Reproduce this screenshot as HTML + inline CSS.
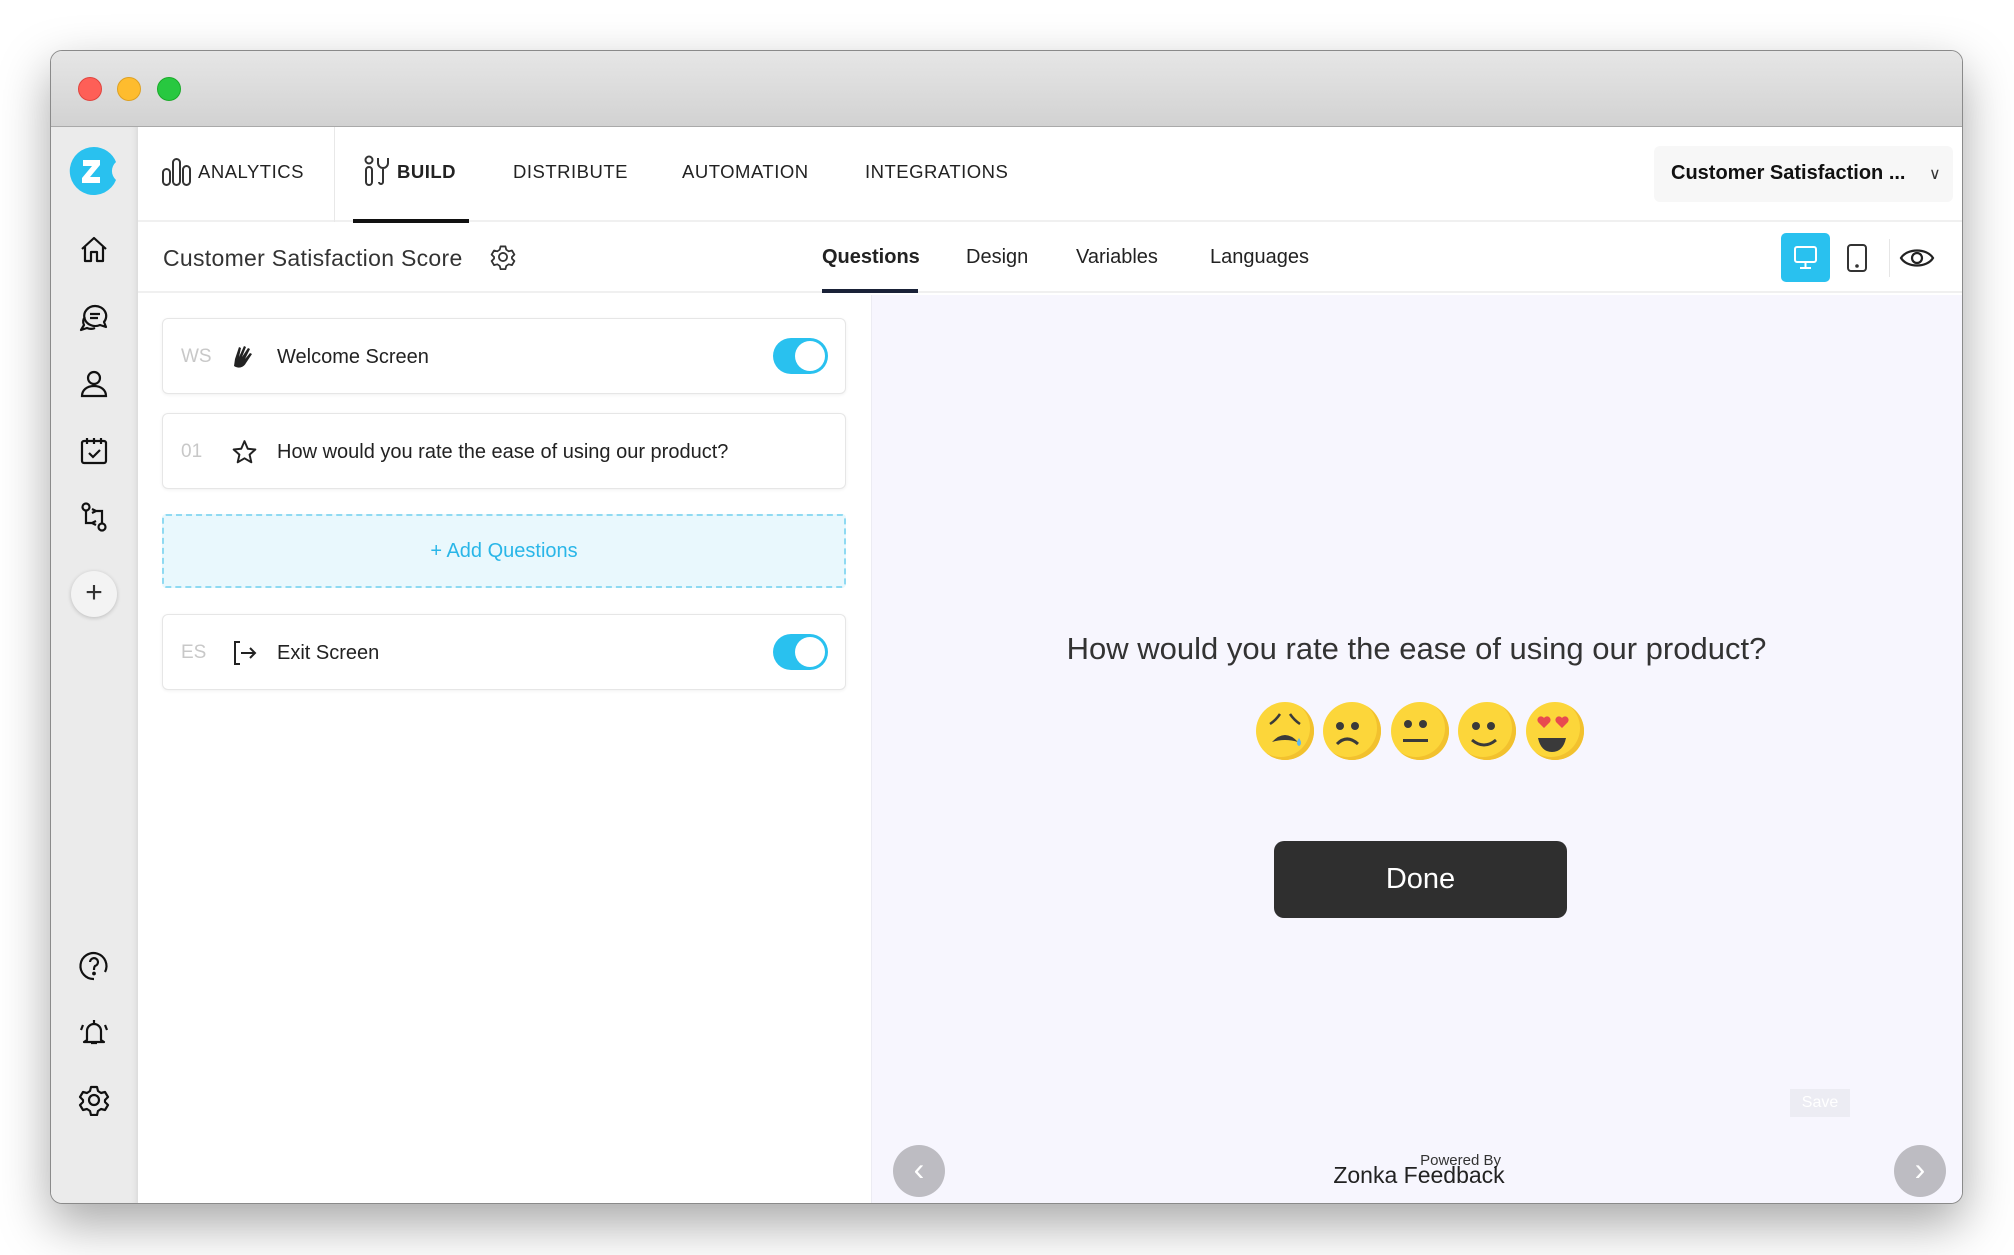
<!DOCTYPE html>
<html><head><meta charset="utf-8"><style>
*{box-sizing:border-box;margin:0;padding:0}
body{width:2014px;height:1255px;background:#fff;font-family:"Liberation Sans",sans-serif;position:relative;overflow:hidden}
.win{position:absolute;left:50px;top:50px;width:1913px;height:1154px;border:1px solid #8a8a8a;border-radius:12px;overflow:hidden;box-shadow:0 20px 50px rgba(0,0,0,.35);background:#fff}
.title{position:absolute;left:0;top:0;width:100%;height:76px;background:linear-gradient(#e6e6e6,#d2d2d2);border-bottom:1px solid #a9a9a9}
.dot{position:absolute;top:26px;width:24px;height:24px;border-radius:50%}
.side{position:absolute;left:0;top:76px;width:87px;bottom:0;background:#ebebeb;box-shadow:inset -6px 0 8px -6px rgba(0,0,0,.12)}
.ic{position:absolute;left:27px;width:32px;height:32px}
.abs{position:absolute}
.nav{font-size:18.5px;letter-spacing:.5px;color:#222;top:110px}
.card{position:absolute;left:111px;width:684px;height:76px;background:#fff;border:1px solid #e6e6e6;border-radius:6px;box-shadow:0 1px 3px rgba(0,0,0,.06)}
.card .n{position:absolute;left:18px;top:27px;font-size:19px;color:#c8c8c8}
.card .t{position:absolute;left:114px;top:27px;font-size:20px;color:#222}
.tog{position:absolute;left:610px;top:19px;width:55px;height:36px;border-radius:18px;background:#29c1ef}
.tog:after{content:"";position:absolute;right:3px;top:3px;width:30px;height:30px;border-radius:50%;background:#fff}
.tab{position:absolute;top:195px;font-size:20px;color:#222}
.emo{position:absolute;top:651px;width:58px;height:58px;border-radius:50%;background:#fcd63a;box-shadow:inset -4px -3px 0 #f2c12e}
</style></head><body>
<div class="win">
 <div class="title">
  <div class="dot" style="left:27px;background:#fe5f57;border:1px solid #e0443e"></div>
  <div class="dot" style="left:66px;background:#febc2e;border:1px solid #dea123"></div>
  <div class="dot" style="left:106px;background:#28c840;border:1px solid #1aab29"></div>
 </div>
 <div class="side">
  <svg class="abs" style="left:18px;top:19px" width="50" height="50" viewBox="0 0 50 50"><path d="M25 1a24 24 0 1 0 22 33a12 12 0 0 1 0-18A24 24 0 0 0 25 1z" fill="#29c1ef"/><path d="M14 14h17v5l-10 12h10v6H13v-5l10-12h-9z" fill="#fff"/></svg>
  <svg class="ic" style="top:107px" viewBox="0 0 32 32" fill="none" stroke="#111" stroke-width="2.2" stroke-linejoin="round"><path d="M4 15L16 4l12 11M7 13v14h6v-9h6v9h6V13"/></svg>
  <svg class="ic" style="top:175px" viewBox="0 0 32 32" fill="none" stroke="#111" stroke-width="2.2" stroke-linejoin="round"><path d="M17 4a11 10 0 0 1 9 16l2 5-6-2a11 10 0 1 1-5-19z"/><path d="M7 15a9 8 0 0 0 -1 8l-3 5 6-2a9 8 0 0 0 8 0M12 12h10M12 16h8"/></svg>
  <svg class="ic" style="top:241px" viewBox="0 0 32 32" fill="none" stroke="#111" stroke-width="2.2"><circle cx="16" cy="10" r="6"/><path d="M4 28c0-6 5-10 12-10s12 4 12 10z"/></svg>
  <svg class="ic" style="top:308px" viewBox="0 0 32 32" fill="none" stroke="#111" stroke-width="2.2"><rect x="4" y="6" width="24" height="22" rx="2"/><path d="M9 3v6M16 3v6M23 3v6M11 18l4 4 7-7"/></svg>
  <svg class="ic" style="top:374px" viewBox="0 0 32 32" fill="none" stroke="#111" stroke-width="2.2"><circle cx="8" cy="6" r="3.5"/><circle cx="24" cy="26" r="3.5"/><path d="M8 10v12h6M18 24l-4-2 4-2M24 22V10h-6M14 8l4 2-4 2"/></svg>
  <div class="abs" style="left:20px;top:444px;width:46px;height:46px;border-radius:50%;background:#f3f3f3;box-shadow:0 1px 4px rgba(0,0,0,.2);text-align:center;line-height:44px;font-size:30px;color:#333">+</div>
  <svg class="ic" style="top:823px" viewBox="0 0 32 32" fill="none" stroke="#111" stroke-width="2.2"><path d="M16 29A13 13 0 1 1 27 22"/><path d="M12 12a4 4 0 1 1 5 4c-1 1-1 2-1 4"/><circle cx="16" cy="23.5" r=".8" fill="#111"/></svg>
  <svg class="ic" style="top:889px" viewBox="0 0 32 32" fill="none" stroke="#111" stroke-width="2.2" stroke-linejoin="round"><path d="M16 4v3M9 24V15a7 7 0 0 1 14 0v9l3 2H6zM13 27h6M5 9l-2 5M27 9l2 5"/></svg>
  <svg class="ic" style="top:957px" viewBox="0 0 32 32" fill="none" stroke="#111" stroke-width="2.2" stroke-linejoin="round"><path d="M13 3h6l1 4 3 2 4-1 3 5-3 3v2l3 3-3 5-4-1-3 2-1 4h-6l-1-4-3-2-4 1-3-5 3-3v-2L2 13l3-5 4 1 3-2z"/><circle cx="16" cy="16" r="5"/></svg>
 </div>
 <div class="abs" style="left:87px;top:76px;right:0;height:95px;border-bottom:2px solid #f0f0f0"></div>
 <div class="abs" style="left:283px;top:76px;width:1px;height:95px;background:#e8e8e8"></div>
 <svg class="abs" style="left:110px;top:106px" width="32" height="30" viewBox="0 0 32 30" fill="none" stroke="#333" stroke-width="2"><rect x="2" y="12" width="7" height="16" rx="3.5"/><rect x="12" y="2" width="7" height="26" rx="3.5"/><rect x="22" y="9" width="7" height="19" rx="3.5"/></svg>
 <div class="abs nav" style="left:147px">ANALYTICS</div>
 <svg class="abs" style="left:311px;top:104px" width="28" height="32" viewBox="0 0 28 32" fill="none" stroke="#333" stroke-width="2"><circle cx="7" cy="5" r="3.5"/><rect x="4" y="12" width="6" height="18" rx="3"/><path d="M16 3v5a5 5 0 0 0 10 0V3M21 13v14a2 2 0 0 1-4 0"/></svg>
 <div class="abs nav" style="left:346px;font-weight:bold">BUILD</div>
 <div class="abs" style="left:302px;top:168px;width:116px;height:4px;background:#111"></div>
 <div class="abs nav" style="left:462px">DISTRIBUTE</div>
 <div class="abs nav" style="left:631px">AUTOMATION</div>
 <div class="abs nav" style="left:814px">INTEGRATIONS</div>
 <div class="abs" style="left:1603px;top:95px;width:299px;height:56px;background:#f7f7f7;border-radius:6px"></div>
 <div class="abs" style="left:1620px;top:111px;font-size:20px;font-weight:bold;color:#111">Customer Satisfaction ...</div>
 <div class="abs" style="left:1878px;top:113px;font-size:16px;color:#333">&#8744;</div>
 <div class="abs" style="left:87px;top:172px;right:0;height:70px;border-bottom:2px solid #f0f0f0"></div>
 <div class="abs" style="left:112px;top:194px;font-size:23px;color:#333;letter-spacing:.3px">Customer Satisfaction Score</div>
 <svg class="abs" style="left:439px;top:193px" width="26" height="26" viewBox="0 0 32 32" fill="none" stroke="#333" stroke-width="2.2" stroke-linejoin="round"><path d="M13 3h6l1 4 3 2 4-1 3 5-3 3v2l3 3-3 5-4-1-3 2-1 4h-6l-1-4-3-2-4 1-3-5 3-3v-2L2 13l3-5 4 1 3-2z"/><circle cx="16" cy="16" r="5"/></svg>
 <div class="tab" style="left:771px;font-weight:bold">Questions</div>
 <div class="abs" style="left:771px;top:238px;width:96px;height:4px;background:#1a2238"></div>
 <div class="tab" style="left:915px">Design</div>
 <div class="tab" style="left:1025px">Variables</div>
 <div class="tab" style="left:1159px">Languages</div>
 <div class="abs" style="left:1730px;top:182px;width:49px;height:49px;border-radius:5px;background:#29c1ef"></div>
 <svg class="abs" style="left:1741px;top:193px" width="27" height="27" viewBox="0 0 27 27" fill="none" stroke="#fff" stroke-width="2"><rect x="3" y="3" width="21" height="15" rx="2"/><path d="M13.5 18v5M8 24h11"/></svg>
 <svg class="abs" style="left:1794px;top:192px" width="24" height="30" viewBox="0 0 24 30" fill="none" stroke="#333" stroke-width="2"><rect x="3" y="2" width="18" height="26" rx="3"/><circle cx="12" cy="23" r=".8" fill="#333"/></svg>
 <div class="abs" style="left:1838px;top:188px;width:1px;height:38px;background:#e6e6e6"></div>
 <svg class="abs" style="left:1848px;top:193px" width="36" height="28" viewBox="0 0 36 28" fill="none" stroke="#222" stroke-width="2.2"><path d="M2 14C8 4 28 4 34 14C28 24 8 24 2 14z"/><circle cx="18" cy="14" r="5"/></svg>
 <div class="card" style="top:267px"><div class="n">WS</div>
  <svg class="abs" style="left:68px;top:24px" width="26" height="28" viewBox="0 0 26 28"><path d="M4 16l4-12 2 1-2 9 5-11 2 1-4 10 6-9 2 1-5 10 5-6 2 1-6 9a8 8 0 0 1-12 3z" fill="#222"/></svg>
  <div class="t">Welcome Screen</div><div class="tog"></div></div>
 <div class="card" style="top:362px"><div class="n">01</div>
  <svg class="abs" style="left:68px;top:25px" width="27" height="26" viewBox="0 0 24 24" fill="none" stroke="#222" stroke-width="1.8" stroke-linejoin="round"><path d="M12 2l3 7 7 .7-5.3 4.7 1.6 7.1L12 17.8 5.7 21.5l1.6-7.1L2 9.7 9 9z"/></svg>
  <div class="t">How would you rate the ease of using our product?</div></div>
 <div class="abs" style="left:111px;top:463px;width:684px;height:74px;background:#e9f8fd;border:2px dashed #8fdaf2;border-radius:4px;text-align:center;line-height:70px;font-size:20px;color:#29b6e8">+ Add Questions</div>
 <div class="card" style="top:563px"><div class="n">ES</div>
  <svg class="abs" style="left:68px;top:24px" width="28" height="28" viewBox="0 0 28 28" fill="none" stroke="#222" stroke-width="2"><path d="M9 3H4v22h5M10 14h14M19 9l5 5-5 5"/></svg>
  <div class="t">Exit Screen</div><div class="tog"></div></div>
 <div class="abs" style="left:820px;top:244px;right:0;bottom:0;background:#f7f6fe;border-left:1px solid #ececf3"></div>
 <div class="abs" style="left:820px;right:0;top:580px;text-align:center;font-size:31px;color:#333">How would you rate the ease of using our product?</div>
 <div class="emo" style="left:1205px"></div><div class="emo" style="left:1272px"></div><div class="emo" style="left:1340px"></div><div class="emo" style="left:1407px"></div><div class="emo" style="left:1475px"></div>
 <svg class="abs" style="left:1205px;top:651px" width="330" height="58" viewBox="0 0 330 58" fill="#3a3a3a">
  <path d="M16 40q13-14 26 0q-13 -4 -26 0z"/><path d="M14 22q6-4 10-10M44 22q-6-4-10-10" stroke="#3a3a3a" stroke-width="2.5" fill="none"/><path d="M43 36q4 6 0 8q-4-2 0-8z" fill="#5bb7f0"/>
  <circle cx="84" cy="24" r="4"/><circle cx="99" cy="24" r="4"/><path d="M81 42q10-10 21 0" stroke="#3a3a3a" stroke-width="3" fill="none"/>
  <circle cx="152" cy="22" r="4"/><circle cx="167" cy="22" r="4"/><rect x="147" y="37" width="25" height="3"/>
  <circle cx="220" cy="24" r="4"/><circle cx="235" cy="24" r="4"/><path d="M216 38q12 10 24 0" stroke="#3a3a3a" stroke-width="3" fill="none"/>
  <path d="M282 36h28q-3 14 -14 14q-11 0 -14-14z"/><path d="M288 26l-6-6a3.5 3.5 0 0 1 6-4a3.5 3.5 0 0 1 6 4zM306 26l-6-6a3.5 3.5 0 0 1 6-4a3.5 3.5 0 0 1 6 4z" fill="#e84a4f"/>
 </svg>
 <div class="abs" style="left:1223px;top:790px;width:293px;height:77px;background:#2f2f2f;border-radius:10px;color:#fff;font-size:29px;text-align:center;line-height:77px">Done</div>
 <div class="abs" style="left:1739px;top:1038px;width:60px;height:28px;background:#ececf3;color:#fff;font-size:16px;text-align:center;line-height:28px">Save</div>
 <div class="abs" style="left:842px;top:1094px;width:52px;height:52px;border-radius:50%;background:#bdbcc2;color:#fff;text-align:center;line-height:48px;font-size:32px">&#8249;</div>
 <div class="abs" style="left:1843px;top:1094px;width:52px;height:52px;border-radius:50%;background:#bdbcc2;color:#fff;text-align:center;line-height:48px;font-size:32px">&#8250;</div>
 <div class="abs" style="left:1340px;top:1101px;width:110px;text-align:right;font-size:15px;color:#333">Powered By</div>
 <div class="abs" style="left:1268px;top:1111px;width:200px;text-align:center;font-size:23px;color:#222">Zonka Feedback</div>
</div>
</body></html>
